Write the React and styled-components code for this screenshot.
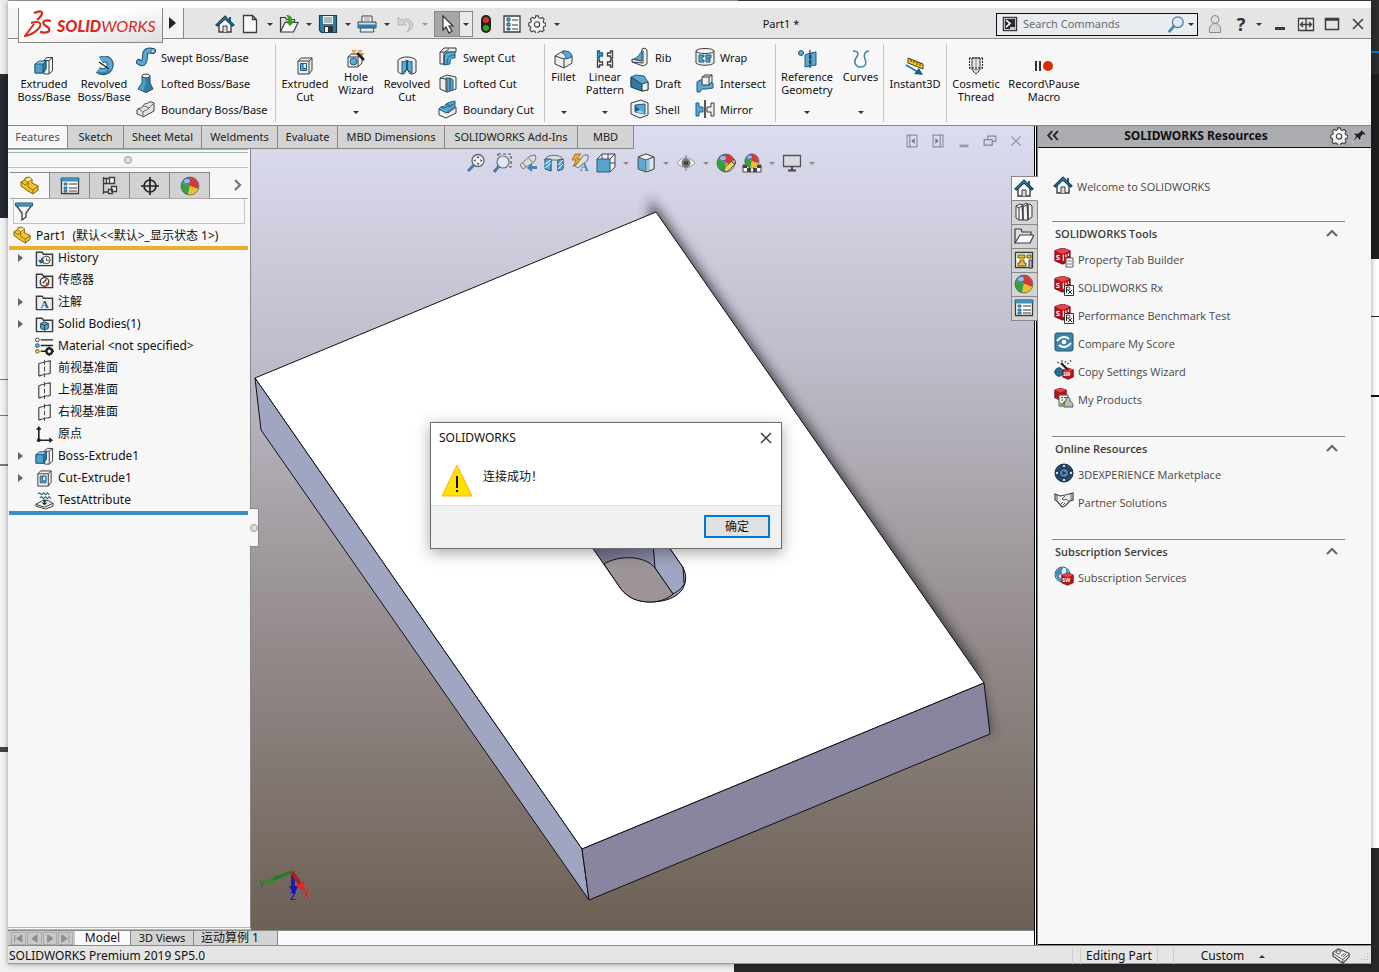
import React, { useState } from "react"
import styled, { createGlobalStyle, css } from "styled-components"

const BLUE = "#5ba9d2"
const DEEP = "#1c5f85"
const INK = "#3d3d3d"
const PALE = "#e4e4e4"

const GlobalStyle = createGlobalStyle`
  * {
    box-sizing: border-box;
  }

  body {
    margin: 0;
    overflow: hidden;
    color: #111;
    font-family: "Noto Sans", "Noto Sans CJK SC", sans-serif;
    font-size: 12px;
    line-height: 16px;
  }

  button,
  input {
    margin: 0;
    padding: 0;
    border: 0;
    background: none;
    color: inherit;
    font: inherit;
  }

  ul {
    margin: 0;
    padding: 0;
    list-style: none;
  }
`

/* ---------- icons ---------- */

const cubeShape = (
  <>
    <path d="M1 3 10 0l9 3v12l-9 4-9-4z" fill="#b3131b" stroke="#5c0a0e" />
    <path d="M1 3 10 0l9 3-9 4z" fill="#e0454b" />
  </>
)

const cube = (
  <>
    {cubeShape}
    <text x="2" y="14" fontSize="8" fontWeight="700" fill="#fff">SW</text>
  </>
)

// the right half of this cube sits behind a badge
const badgedCube = (
  <g transform="scale(.85)">
    {cubeShape}
    <path d="M11 8v7M14 7.500v3M17 6.500v3" stroke="#fff" strokeWidth="1.400" />
    <text x="2" y="14" fontSize="9" fontWeight="700" fill="#fff">S</text>
  </g>
)

const ball = (
  <>
    <path d="M10 10 2 6a9 9 0 0 1 8-5z" fill="#3f78c4" />
    <path d="M10 10V1a9 9 0 0 1 8 12z" fill="#d43a35" />
    <path d="M10 10 2 6a9 9 0 0 0 6 13z" fill="#35a23d" />
    <path d="m10 10 8 3a9 9 0 0 1-10 6z" fill="#f0bf2d" />
    <circle cx="10" cy="10" r="9" fill="none" stroke="#555" strokeWidth=".7" />
    <ellipse cx="7" cy="5" rx="3" ry="2" fill="#fff" opacity=".5" />
  </>
)

const folder = (
  <path d="M1.500 3.500h6l1.500 2h9.500v12h-17z" fill="#eee" stroke={INK} strokeWidth="1.500" />
)

const extruded = (
  <>
    <path d="M10 4 13 1.500h5.500V15L15 18h-5z" fill="#f4f4f4" stroke={INK} />
    <path d="M15 4.500V18M10 4.500h5l3.500-3" fill="none" stroke={INK} />
    <path d="m1 8 4-3h7v8l-3 4H1z" fill="#9bcfe8" stroke={DEEP} />
    <path d="M1 8h8v9H1z" fill="#4f9fc8" stroke={DEEP} />
    <path d="m9 8 3-3v8l-3 4z" fill="#2f7ba3" stroke={DEEP} />
  </>
)

const extrudedCut = (
  <>
    <path d="m3 5 3-3h11v12l-3 4H3z" fill="#eee" stroke={INK} />
    <path d="M3 5h11v13M14 5l3-3" fill="none" stroke={INK} />
    <path d="M5.500 7.500h6v7h-6z" fill={BLUE} stroke={DEEP} />
    <path d="M8 7.500h3.500v5H8z" fill="#d7ecf7" stroke={DEEP} />
  </>
)

const partShape = (
  <>
    <path d="m1 6 4-2V2l4-1 3 2v4l6 3v4l-5 4-5-3-7-5z" fill="#f3c42e" stroke="#7c5d09" />
    <path d="m5 4 3 2 4-3M8 6v5l5 3 5-4M13 14v4M1 6l4 3 3-2" fill="none" stroke="#8d6b0e" />
    <path d="m5 4 4-2.500L12 3 8 5.500z" fill="#fbe48b" />
  </>
)

const icons = {
  home: (
    <>
      <path d="M4 9v9h12V9l-6-5z" fill="#f6f6f6" stroke={INK} strokeWidth="1.400" />
      <path d="M8 18v-6h4v6" fill="#ddd" stroke={INK} />
      <path d="M14 3h2v4h-2z" fill={DEEP} />
      <path d="m1 11 9-9 9 9-1.500 1L10 5l-7.500 7z" fill="#3f8db5" stroke="#14405a" strokeWidth="1.200" />
    </>
  ),
  page: (
    <path d="M3.500 1.500h9l4 4v13h-13zM12.500 1.500v4h4" fill="#f8f8f8" stroke={INK} strokeWidth="1.300" />
  ),
  open: (
    <>
      <path d="M1.500 17.500v-14h5l1 2h8v3" fill="#ddd" stroke={INK} strokeWidth="1.200" />
      <path d="M1.500 18 6 8.500h13L14.500 18z" fill="#fafafa" stroke={INK} strokeWidth="1.200" />
      <path d="M7 1c5 0 6 2 6 6h3l-5 5-5-5h3c0-3 0-4-2-6z" fill="#3c9c20" />
    </>
  ),
  save: (
    <>
      <path d="M1.500 1.500h17v17h-15l-2-2z" fill="#2f7ca5" stroke="#173f57" strokeWidth="1.200" />
      <path d="M5 2h10v8H5z" fill="#f4f4f4" />
      <path d="M6 4h8M6 6h8M6 8h8" stroke="#777" />
      <path d="M6 12h9v6H6z" fill="#333" />
      <path d="M7 13h3v5H7z" fill="#eee" />
    </>
  ),
  print: (
    <>
      <path d="M5 8V2h10v6" fill="#fff" stroke={INK} />
      <path d="M7 4h6M7 6h6" stroke="#888" />
      <path d="M1 8h18v6H1z" fill="#cfe0e9" stroke={INK} />
      <path d="M1 10.500h18V14H1z" fill="#2f7ca5" />
      <path d="M4 14h12l1 4H3z" fill="#e8f2f8" stroke={DEEP} />
    </>
  ),
  undo: (
    <path d="M2 3v8h8L7 8c4-2 8 1 6 6l-2 4c6-3 7-8 4-11-3-3-7-2-10-1z" fill="#d2d2d2" stroke="#b5b5b5" />
  ),
  cursor: <path d="M6 2v14l3-3 3 6 3-2-3-5h4z" fill="#fff" stroke="#333" strokeWidth="1.200" />,
  traffic: (
    <>
      <rect x="5" y="1" width="10" height="18" rx="5" fill="#222" />
      <circle cx="10" cy="6" r="3" fill="#e0351d" />
      <circle cx="10" cy="14" r="3" fill="#35a518" />
    </>
  ),
  list: (
    <>
      <path d="M2 2h16v16H2z" fill="#fafafa" stroke={INK} strokeWidth="1.300" />
      <path d="M5 4h3v3H5zM5 9h3v3H5zM5 14h3v2H5z" fill={BLUE} stroke={DEEP} />
      <path d="M10 6h6M10 11h6M10 15h6" stroke={INK} />
    </>
  ),
  gear: (
    <>
      <path
        d="M8.500 1h3l.6 2.200 1.700.7 2-1.100 2.100 2.100-1.100 2 .7 1.700 2.200.6v3l-2.200.6-.7 1.700 1.100 2-2.100 2.100-2-1.100-1.700.7-.6 2.200h-3l-.6-2.200-1.700-.7-2 1.100-2.100-2.100 1.100-2-.7-1.700L.8 12V9l2.200-.6.700-1.700-1.100-2 2.100-2.100 2 1.100 1.700-.7z"
        fill="#f5f5f5"
        stroke={INK}
        strokeWidth="1.200"
      />
      <circle cx="10" cy="10.500" r="3" fill="none" stroke={INK} strokeWidth="1.200" />
    </>
  ),
  prompt: (
    <>
      <path d="M1 1h18v18H1z" fill="#2b2b2b" />
      <path d="M3 3h14v14H3z" fill="none" stroke="#fff" />
      <path d="m5 5 5 4.500L5 14M10 15h6" fill="none" stroke="#fff" strokeWidth="2" />
    </>
  ),
  magnifier: (
    <>
      <path d="m8 12-6 7" stroke="#4a86ab" strokeWidth="3" />
      <circle cx="12" cy="8" r="6" fill="#dcecf7" stroke="#55788d" strokeWidth="1.300" />
    </>
  ),
  user: (
    <>
      <circle cx="10" cy="5.500" r="4" fill="#ddd" stroke="#888" />
      <path d="M4.500 18.500c-1-6 2-9 5.500-9s6.500 3 5.500 9z" fill="#d8d8d8" stroke="#888" />
    </>
  ),
  minimize: <path d="M5 13h10v3H5z" fill={INK} />,
  span: (
    <path d="M2.500 4.500h15v12h-15zM10 4v13M4.500 10.500h11M7 8l-2.500 2.500L7 13M13 8l2.500 2.500L13 13" fill="none" stroke={INK} strokeWidth="1.300" />
  ),
  maximize: <path d="M3.500 4.500h13v11h-13zM3 6h14" fill="none" stroke={INK} strokeWidth="1.500" />,
  close: <path d="m5 5 10 10M15 5 5 15" stroke={INK} strokeWidth="1.500" />,
  extruded,
  revolved: (
    <>
      <path d="M7 4c5-3 10 1 9 6-1 6-8 7-12 4" fill="none" stroke="#1d4b66" strokeWidth="7" />
      <path d="M7 4c5-3 10 1 9 6-1 6-8 7-12 4" fill="none" stroke={BLUE} strokeWidth="5" />
      <path d="M15 14c-3 4-8 4-11 2" fill="none" stroke="#2f7ba3" strokeWidth="2" />
      <path d="m5 6 10 7" stroke="#222" strokeWidth="1.300" />
    </>
  ),
  swept: (
    <>
      <path d="M3 15c5 4 6-2 6-6 0-6 4-6 8-5" fill="none" stroke="#1f4f6b" strokeWidth="6" strokeLinecap="round" />
      <path d="M3 15c5 4 6-2 6-6 0-6 4-6 8-5" fill="none" stroke={BLUE} strokeWidth="4" strokeLinecap="round" />
      <circle cx="17" cy="4" r="2" fill="#b8dcef" stroke={DEEP} strokeWidth=".7" />
    </>
  ),
  lofted: (
    <>
      <path d="M6 3v7l-4 6 8 3.500 7-3.500-3-6V3z" fill="#2f7ca5" stroke="#1d4b66" />
      <path d="M6.500 4v6l-4 6 5 2 2-8V4z" fill="#4f9fc8" />
      <ellipse cx="10" cy="3" rx="4" ry="2" fill="#eee" stroke={INK} />
    </>
  ),
  boundary: (
    <>
      <path d="M1 11c3-4 4 0 6-4s4-1 6-4c2-1 4 1 5 1v8l-11 6c-2-2-4-2-6-3z" fill={PALE} stroke={INK} />
      <path d="M1 11c3-2 4 1 6 2 3-3 4-1 6-4 2-2 4-4 5-5M7 13v5M7 7c2 0 4 1 6 2" fill="none" stroke="#666" />
    </>
  ),
  extrudedCut,
  hole: (
    <>
      <path d="m2 8 3-3h11v9l-4 4H2z" fill="#eee" stroke={INK} />
      <path d="M2 8h10v10M12 8l4-3" fill="none" stroke={INK} />
      <circle cx="7.500" cy="12.500" r="3.500" fill={BLUE} stroke={DEEP} />
      <path d="m11 4 7 7" stroke="#222" strokeWidth="2.500" />
      <path d="M6 1l2 2 2-2M12 1l2 2 2-2M5 5l3-1M15 6l3-2" fill="none" stroke="#e0912a" strokeWidth="1.400" />
    </>
  ),
  revolvedCut: (
    <>
      <path d="M1 4c4-4 14-4 18 0v12c-2 2-4 2-6 2l-3-5-3 5c-2 0-4 0-6-2z" fill="#eee" stroke={INK} />
      <path d="M5 5.500c3 1 3-1 5-1v9l-5 4zM15 5.500c-3 1-3-1-5-1v9l5 4z" fill={BLUE} stroke={DEEP} />
      <path d="M10 4v10" stroke="#143c54" />
    </>
  ),
  sweptCut: (
    <>
      <path d="m2 5 4-4h12v4H8v12H2z" fill="#eee" stroke={INK} />
      <path d="M6 18V9c1-4 5-4 11-4v6c-4 0-5 1-5 6z" fill={BLUE} stroke={DEEP} />
      <path d="M6 5v13M2 5h5l4-3" fill="none" stroke={INK} />
      <path d="M9 17c0-6 2-9 8-9" fill="none" stroke="#235f82" />
    </>
  ),
  loftedCut: (
    <>
      <path d="m2 5 7-3 9 2v12l-9 3-7-3z" fill="#eee" stroke={INK} />
      <path d="M8 5h4l3 2v10l-6 2V9z" fill={BLUE} stroke={DEEP} />
      <path d="M12 5v12M2 5l6 1v12" fill="none" stroke={INK} />
    </>
  ),
  boundaryCut: (
    <>
      <path d="m1 10 9 4 8-6v6l-10 5-7-3z" fill="#eee" stroke={INK} />
      <path d="M1 10c3-5 5 0 7-5 3-2 5-2 9-3v6l-9 6z" fill={BLUE} stroke={DEEP} />
      <path d="M4 8c4 3 4-2 7 0 2-3 4-2 6-4M8 5c2 2 4 0 6 3" fill="none" stroke={DEEP} />
    </>
  ),
  fillet: (
    <>
      <path d="m1 7 8-5 6 1 3 4v7l-8 5-9-4z" fill="#eee" stroke={INK} />
      <path d="m8 4 2-2c5 0 8 2 8 6l-6 2c0-4-2-5-4-6z" fill={BLUE} stroke={DEEP} />
      <path d="m1 7 9 3 2-1M10 10v9" fill="none" stroke={INK} />
    </>
  ),
  pattern: (
    <>
      <path d="M2.500 2h2v2h3v3h-3v2h-2z" fill={BLUE} stroke={DEEP} strokeWidth="1.300" />
      <path d="M17.500 2h-2v2h-3v3h3v2h2zM2.500 11h2v2h3v3h-3v2h-2zM17.500 11h-2v2h-3v3h3v2h2z" fill="#fff" stroke={INK} strokeWidth="1.300" />
    </>
  ),
  rib: (
    <>
      <path d="M12 2 15 1l2 2v14l-4 2-11-4v-3l9 2z" fill="#eee" stroke={INK} />
      <path d="M12 4v10l-8-2c4-2 5-4 8-8z" fill={BLUE} stroke={DEEP} />
      <path d="m2 15 11 1V4" fill="none" stroke={INK} />
    </>
  ),
  draft: (
    <>
      <path d="m1 4 5-2 8 1 4 6v8l-6 1-11-4z" fill={BLUE} stroke={DEEP} />
      <path d="M1 4 12 11v7L1 14z" fill="#2f7ca5" stroke={INK} />
      <path d="m12 11 6-2v8l-6 1z" fill="#eee" stroke={INK} />
    </>
  ),
  shell: (
    <>
      <path d="m1 4 10-3 7 3v12l-8 3-9-4z" fill="#eee" stroke={INK} />
      <path d="m5 6 10-1v10L5 13z" fill={BLUE} stroke={DEEP} />
      <path d="M5 13V6l5 5z" fill={DEEP} />
      <path d="m10 11 5 4-10-2z" fill="#9dd2ec" />
    </>
  ),
  wrap: (
    <>
      <path d="M1 4v12c3 3 15 3 18 0V4z" fill="#eee" stroke={INK} />
      <ellipse cx="10" cy="4" rx="9" ry="2.500" fill="#f5f5f5" stroke={INK} />
      <path d="M4 8h5v2H7v3h2v2H4zM16 8h-5v7h4v-3h-2v-1h3z" fill={BLUE} stroke={DEEP} />
    </>
  ),
  intersect: (
    <>
      <path d="M2 9 5 7h7v3h6v5l-7 1H7l-2 3H2z" fill={BLUE} stroke={DEEP} />
      <path d="m7 4 3-2h7v7l-3 3H7z" fill="#eee" stroke={INK} />
      <path d="M7 4h7v8M14 4l3-2" fill="none" stroke={INK} />
    </>
  ),
  mirror: (
    <>
      <path d="M1 4h3v4h4v5H4v4H1z" fill={BLUE} stroke={DEEP} />
      <path d="M19 4h-3v4h-4v5h4v4h3z" fill="#eee" stroke={INK} />
      <path d="M10 1v18" stroke="#111" strokeWidth="1.400" />
    </>
  ),
  reference: (
    <>
      <circle cx="4" cy="4" r="2.500" fill={BLUE} stroke={DEEP} />
      <path d="m8 6 5-2v13l-5 1zM14 4l5-1v13l-5 1z" fill={BLUE} stroke={DEEP} />
      <path d="M13 1v18" stroke="#111" strokeDasharray="4 1" />
    </>
  ),
  curves: (
    <path d="M2 2c6 0 6 3 3 7s0 9 4 9c6 0 7-4 5-8s0-8 4-8" fill="none" stroke="#3b82a8" strokeWidth="1.500" />
  ),
  instant: (
    <>
      <path d="m3 2 15 6v5L3 7z" fill="#f6c62d" stroke="#4a3b10" />
      <path d="M6 3v3M9 4v3M12 6v3M15 7v3" stroke="#4a3b10" />
      <path d="m1 9 12 7" stroke="#2f7ca5" strokeWidth="2" />
      <path d="m18 19-9-1 5-6z" fill={DEEP} />
    </>
  ),
  thread: (
    <>
      <path d="M6 2h8v12l-4 4-4-4z" fill={PALE} stroke={INK} />
      <path d="M6 14h8M10 2v12" stroke="#888" />
      <path d="M3.500 2v10M16.500 2v10" stroke="#222" strokeDasharray="2 1" />
      <path d="M3 2h14M3 12h14" stroke="#222" strokeDasharray="2 1" />
    </>
  ),
  record: (
    <>
      <path d="M2 5v10M6 5v10" stroke="#333" strokeWidth="2" />
      <circle cx="14" cy="10" r="5" fill="#dc2a05" />
    </>
  ),
  part: partShape,
  properties: (
    <>
      <path d="M1.500 2.500h17v15h-17z" fill="#fafafa" stroke={INK} strokeWidth="1.300" />
      <path d="M1 2h18v3H1z" fill="#4b9cc6" stroke={DEEP} strokeWidth=".7" />
      <path d="M4 7h3v2H4zM4 11h3v2H4zM4 14h3v2H4z" fill={BLUE} stroke={DEEP} strokeWidth=".8" />
      <path d="M9 8h8M9 12h8M9 15h8" stroke={INK} />
    </>
  ),
  config: (
    <>
      <path d="M3.500 1v17M3.500 2.500h3M3.500 7.500h3M6 5h3M3.500 16h7" fill="none" stroke={INK} strokeWidth="1.300" />
      <path d="M6.500 2.500h3v5h-3zM9.500 1.500h5v6h-5zM11.500 10.500h5v5h-5zM8.500 13.500h4v4h-4z" fill="#f4f4f4" stroke={INK} strokeWidth="1.300" />
    </>
  ),
  target: (
    <>
      <circle cx="10" cy="10" r="6" fill="none" stroke="#222" strokeWidth="1.700" />
      <path d="M10 1v18M1 10h18" stroke="#222" strokeWidth="1.700" />
    </>
  ),
  ball,
  funnel: (
    <>
      <path d="M2 4 8 12v7l4-3v-4l6-8z" fill="#f6f6f6" stroke={INK} strokeWidth="1.300" />
      <path d="M1.500 2h17v3h-17z" fill="#4b9cc6" stroke={DEEP} />
    </>
  ),
  history: (
    <>
      {folder}
      <circle cx="12" cy="11.500" r="4" fill="#fff" stroke={INK} />
      <path d="M12 9v3h3" fill="none" stroke={INK} />
      <path d="M9 15c-3-1-3-5-1-6M4 12l2 3 3-3z" fill={DEEP} stroke={DEEP} />
    </>
  ),
  sensor: (
    <>
      {folder}
      <circle cx="10" cy="11.500" r="4.500" fill="#fff" stroke={INK} strokeWidth="1.500" />
      <path d="m8 13 4-4" stroke={INK} strokeWidth="1.500" />
      <path d="M11 12h3v2l-2 2z" fill="#d93a1d" />
    </>
  ),
  notes: (
    <>
      {folder}
      <text x="10" y="16" fontSize="12" fontWeight="700" fontFamily="Liberation Serif, serif" textAnchor="middle" fill={DEEP}>A</text>
    </>
  ),
  bodies: (
    <>
      {folder}
      <path d="m6 9 4-2 4 2v5l-4 2-4-2z" fill={BLUE} stroke="#173f57" />
      <path d="m6 9 4 2 4-2M10 11v5" fill="none" stroke="#173f57" />
    </>
  ),
  material: (
    <>
      <path d="M6 3h13M6 9h13M6 15h5" stroke="#222" strokeWidth="1.500" />
      <circle cx="2.500" cy="3" r="2" fill="#fff" stroke={INK} />
      <circle cx="2.500" cy="9" r="2" fill={BLUE} stroke={DEEP} />
      <circle cx="2.500" cy="15" r="2" fill="#f3c42e" stroke="#8d6b0e" />
      <circle cx="15" cy="15" r="3" fill="#fff" stroke="#222" strokeWidth="2.500" />
      <path d="M15 10v2M15 18v2M10 15h2M18 15h2" stroke="#222" strokeWidth="1.500" />
    </>
  ),
  plane: (
    <>
      <path d="M4 5v13M4 5l3-1M13 2.500 16 2v13l-3 1M4 18l3-1" fill="none" stroke={INK} strokeWidth="1.200" />
      <path d="M10 1v18" stroke={INK} strokeDasharray="5 2" />
      <path d="m7 4 6-1.500M7 17l6-1.500" stroke={INK} />
    </>
  ),
  origin: (
    <>
      <path d="M4 16V4M4 16h12" stroke="#222" strokeWidth="1.700" />
      <path d="m4 1 3 4H1zM19 16l-4-3v6z" fill="#222" />
      <circle cx="4" cy="16" r="2" fill="#222" />
    </>
  ),
  attribute: (
    <>
      <path d="m3 3 2-1 2 2 2-2 2 2 2-2 2 2M5 7l2-1 2 2 2-2 2 2 2-2 2 2" fill="none" stroke={DEEP} strokeWidth="1.200" />
      <path d="m1 14 7-4h6l5 3v3l-8 3-10-3z" fill="#eee" stroke={INK} />
      <path d="m1 14 9 3 9-4" fill="none" stroke={INK} />
      <path d="M10 9v3" stroke="#222" strokeWidth="2" />
      <path d="m7 12 3 3 3-3z" fill="#222" />
    </>
  ),
  zoomFit: (
    <>
      <path d="m8 12-6 6" stroke="#447fa3" strokeWidth="3" />
      <circle cx="12" cy="7.500" r="6" fill="#eef2f8" stroke="#666" strokeWidth="1.300" />
      <path d="m12 3 1.500 2h-3zM12 12l1.500-2h-3zM7.500 7.500l2-1.500v3zM16.500 7.500l-2-1.500v3z" fill="#444" />
    </>
  ),
  zoomArea: (
    <>
      <path d="M6 1h13v13H6z" fill="none" stroke="#555" strokeWidth="1.200" strokeDasharray="3 2" />
      <path d="m7 13-5 6" stroke="#447fa3" strokeWidth="3" />
      <circle cx="11" cy="9" r="6" fill="#dde9f3" stroke="#777" strokeWidth="1.200" />
    </>
  ),
  previous: (
    <>
      <path d="m2 12 10-9 5-1 1 3-2 4-11 7z" fill="#ddd" stroke="#777" />
      <path d="m10 4 4 5M5 10l3 4" stroke="#777" />
      <path d="M19 13h-5v-3l-5 5 5 4v-3h5z" fill="#4187ad" />
    </>
  ),
  section: (
    <>
      <path d="M1 6c3-5 15-5 18 0v9l-5 2V7H7v11l-5-2z" fill="#ddd" stroke="#666" />
      <path d="M1 6h6v12l-6-2zM14 7l5-1v10l-5 2z" fill={BLUE} stroke={DEEP} />
      <path d="m1 11 6-4M1 15l6-5M14 12l5-5M14 16l5-5" stroke="#e6f4fb" />
    </>
  ),
  dynamic: (
    <>
      <path d="m5 13 9-11h4v5L8 15z" fill="#ddd" stroke="#777" />
      <path d="m5 1-3 6h4l-3 7 8-8H7l4-5z" fill="#f0ab2a" stroke="#9c6a0d" strokeWidth=".8" />
      <text x="14" y="18" fontSize="12" fontWeight="700" fontFamily="Liberation Serif, serif" textAnchor="middle" fill="#3d84ab">A</text>
    </>
  ),
  orientation: (
    <>
      <path d="m1 6 5-5h13v13l-5 5" fill="#eef0f8" stroke="#444" />
      <path d="M14 6l5-5M6 1v6M12 1v5M14 10h5" stroke="#444" />
      <path d="M1 6h13v13H1z" fill="#5aa3c9" stroke={DEEP} />
    </>
  ),
  display: (
    <>
      <path d="m2 4 8-3 8 3v12l-8 3-8-3z" fill={BLUE} stroke="#555" />
      <path d="m2 4 8-3 8 3-8 3z" fill="#e9f3f8" stroke="#555" />
      <path d="m10 7 8-3v12l-8 3z" fill="#dfe8ee" stroke="#555" />
      <path d="M12 7v10" stroke="#8cc4df" strokeWidth="3" />
    </>
  ),
  eye: (
    <>
      <path d="M1 10c5-7 13-7 18 0-5 6-13 6-18 0z" fill="#eee" stroke="#999" />
      <circle cx="10" cy="10" r="4.500" fill="#777" />
      <circle cx="10" cy="10" r="2" fill="#222" />
      <path d="M10 2v16" stroke="#777" />
    </>
  ),
  appearance: (
    <>
      {ball}
      <path d="m8 19 1-5 8-7 3 3-8 8z" fill="#f4d35c" stroke="#555" />
      <path d="m15 8 3-2 2 3-2 2z" fill="#e08c8c" stroke="#555" />
    </>
  ),
  scene: (
    <>
      <path d="M1 12h18v7H1z" fill="#fff" stroke="#444" />
      <path d="M1 12h4v3H1zM15 12h4v3h-4zM5 15h4v4H5zM11 15h4v4h-4z" fill="#444" />
      <g transform="translate(2 0) scale(.8)">{ball}</g>
    </>
  ),
  monitor: (
    <>
      <path d="M1.500 2.500h17v11h-17z" fill="#d9dae2" stroke="#555" strokeWidth="1.300" />
      <path d="M10 14v3M6 17.500h8" stroke="#444" strokeWidth="2" />
    </>
  ),
  paneLeft: (
    <>
      <path d="M4.500 3.500h11v13h-11zM7.500 4v12" fill="none" stroke="#8f8f99" strokeWidth="1.300" />
      <path d="M13 7v6l-4-3z" fill="#777" />
    </>
  ),
  paneRight: (
    <>
      <path d="M4.500 3.500h11v13h-11zM12.500 4v12" fill="none" stroke="#8f8f99" strokeWidth="1.300" />
      <path d="M7 7v6l4-3z" fill="#777" />
    </>
  ),
  docMinimize: <path d="M5 14h10v3H5z" fill="#999" />,
  restore: <path d="M3.500 8.500h9v6h-9zM7.500 8V4.500h9v6H13" fill="none" stroke="#888" strokeWidth="1.300" />,
  docClose: <path d="m5 5 10 10M15 5 5 15" stroke="#999" strokeWidth="1.400" />,
  collapse: <path d="M9 4 4 9.500 9 15M16 4l-5 5.500 5 5.500" fill="none" stroke="#222" strokeWidth="2.300" />,
  pin: <path d="m12 1 7 7-2 1-2-1-3 4c1 2 0 3-1 4l-3-4-7 7 5-9-3-3c2-1 3-1 5 0l4-3z" fill="#222" stroke="#eee" strokeWidth=".7" />,
  chevronRight: <path d="m7 5 5 5-5 5" fill="none" stroke="#777" strokeWidth="2.300" />,
  chevronUp: <path d="m5 12 5-5 5 5" fill="none" stroke="#666" strokeWidth="2" />,
  library: (
    <>
      <path d="m2 4 4-2 3 1v15H5l-3-2zM8 4l4-3 2 1v16H9zM13 3l3-1 2 2v11l-4 3z" fill="#f2f2f2" stroke={INK} />
      <path d="m2 4 3 2v12M5 6l4-3M9 5v13M9 5l5-3M14 4v14" fill="none" stroke={INK} />
    </>
  ),
  explorer: (
    <>
      <path d="M1 17V3h6l1 3h9v3" fill="#ddd" stroke={INK} strokeWidth="1.200" />
      <path d="M1 17 6 9h14l-4 8z" fill="#fafafa" stroke={INK} strokeWidth="1.200" />
    </>
  ),
  palette: (
    <>
      <path d="M1.500 2.500h17v15h-17z" fill="#fff" stroke={INK} strokeWidth="1.400" />
      <path d="M4 5h7v3H4zM13 5h4v3h-4zM6 10h4v3h2v3H4v-3h2z" fill="#f2c12c" stroke="#6d5208" />
      <path d="M15 10h3v8h-3z" fill="#bbb" stroke={INK} />
    </>
  ),
  builder: (
    <>
      {badgedCube}
      <path d="M12 10h7v9h-7z" fill="#fff" stroke="#555" />
      <path d="M13 13h5M13 16h5" stroke="#777" />
    </>
  ),
  rx: (
    <>
      {badgedCube}
      <path d="M10.500 9.500h9v10h-9z" fill="#fff" stroke="#333" />
      <path d="M12.500 17v-6h2c2 0 2 3 0 3h-2M14 14l4 4M18 14l-4 4" fill="none" stroke="#222" />
    </>
  ),
  compare: (
    <>
      <rect x="1" y="1" width="18" height="18" rx="2" fill="#3f83ab" stroke="#1d5273" />
      <path d="M3 9c4-5 9-5 12-2M17 11c-4 5-9 5-12 2" fill="none" stroke="#fff" strokeWidth="2" />
      <circle cx="10" cy="10" r="2.300" fill="#fff" />
    </>
  ),
  wizard: (
    <>
      <circle cx="5" cy="12" r="3.500" fill="#4b9cc6" stroke={DEEP} strokeWidth="2" />
      <path d="M5 7v10M0 12h10" stroke={DEEP} strokeWidth="1.500" />
      <g transform="translate(8 8) scale(.6)">{cube}</g>
      <path d="m7 3 7 7" stroke="#222" strokeWidth="2.300" />
      <path d="M3 2l2 1M8 0v2M12 1l-1 2M15 3l-2 1M16 0l1 2" stroke="#333" />
    </>
  ),
  products: (
    <>
      <g transform="scale(.65)">{cubeShape}</g>
      <path d="M5 7h9v11H5z" fill="#f4f4f4" stroke="#555" />
      <path d="M7 9.500h2M7 12h2M10 9.500h3" stroke="#555" />
      <path d="m6 15 2 2 3-4" fill="none" stroke="#3f9c20" strokeWidth="1.400" />
      <path d="M10 19c0-5 1-5 2-6-1-5 5-5 4 0 2 1 3 2 3 6z" fill="#bbb" stroke="#555" />
    </>
  ),
  market: (
    <>
      <circle cx="10" cy="10" r="9" fill="#27476a" stroke="#152d47" />
      <circle cx="10" cy="10" r="4.500" fill="#5f87ab" stroke="#18324e" />
      <path d="m8.500 7.500 4 2.500-4 2.500z" fill="#1f3e5e" />
      <path d="M10 2v2M10 16v2M2 10h2M16 10h2" stroke="#cfe1f0" strokeWidth="2" />
    </>
  ),
  handshake: (
    <>
      <path d="m1 3 5 2 5-1 8-2v7l-3 1-5 5-3 1-5-6-2-1z" fill="#eee" stroke="#444" strokeWidth="1.200" />
      <path d="m11 5-3 3 2 1 2-1 4 3M7 13l2-2M9 14l2-2M3 4v5M17 3v6" fill="none" stroke="#555" />
    </>
  ),
  globe: (
    <>
      <circle cx="8.500" cy="8.500" r="7.500" fill="#dff0f8" stroke="#24546f" />
      <path d="M3 4c3-3 6-3 6-2S7 5 8 7s-3 1-3 3 3 2 2 5c-4-1-7-7-4-11zM12 2l3 5-3 1z" fill="#4589ad" />
      <g transform="translate(7 7) scale(.65)">{cube}</g>
    </>
  ),
  tag: (
    <>
      <path d="m1 6 6-4 12 5v4l-7 7-11-8z" fill="#f5f5f5" stroke={INK} strokeWidth="1.200" />
      <path d="m1 7 11 7 7-6M12 14v3M4 6l3-2 3 1-2 3zM10 10l4-3M12 11l4-3" fill="none" stroke={INK} />
    </>
  ),
}

const Svg = styled.svg`
  display: block;
  flex: none;
  width: ${p => p.$size}px;
  height: ${p => p.$size}px;
`

const Icon = ({ name, size = 20 }) => (
  <Svg viewBox="0 0 20 20" $size={size} aria-hidden="true">
    {icons[name]}
  </Svg>
)

const Caret = styled.span`
  border: 3px solid transparent;
  border-top-color: ${p => p.$color || "#333"};
  border-bottom-width: 0;
`

/* ---------- frame ---------- */

const Desktop = styled.div`
  display: grid;
  grid-template: 1px minmax(0, 1fr) 8px / 8px minmax(0, 1fr) 8px;
  height: 100vh;
  background: linear-gradient(to right, #eff0f2 734px, #29292b 734px);
`

const strip = css`
  grid-row: 1 / 3;
`

const LeftStrip = styled.div`
  ${strip}
  grid-column: 1;
  background: linear-gradient(
    #efefef 74px,
    #262a33 74px 218px,
    #f3f3f3 218px 379px,
    #777 379px 380px,
    #f3f3f3 380px 415px,
    #777 415px 416px,
    #f3f3f3 416px 464px,
    #777 464px 466px,
    #f3f3f3 466px 747px,
    #444 747px 752px,
    #f3f3f3 752px
  );
`

const RightStrip = styled.div`
  ${strip}
  grid-column: 3;
  background: linear-gradient(
    #2d2d30 51px,
    #007acc 51px 53px,
    #2d2d30 53px 74px,
    #1e1e1e 74px 259px,
    #fff 259px 316px,
    #222 316px 317px,
    #fff 317px 395px,
    #111 395px 397px,
    #fff 397px 848px,
    #29292b 848px
  );
`

const TopStrip = styled.div`
  grid-column: 2;
  grid-row: 1;
  background: linear-gradient(to right, #a8a8a8 730px, #444 730px);
`

const Window = styled.div`
  position: relative;
  grid-column: 2;
  grid-row: 2;
  display: flex;
  flex-direction: column;
  min-height: 0;
  background: #f7f7f7;
  box-shadow: 0 0 6px rgba(0, 0, 0, 0.4);
`

const TitleBar = styled.header`
  display: flex;
  align-items: center;
  height: 38px;
  padding: 2px 3px 0 0;
  border-top: 7px solid #fff;
  border-bottom: 1px solid #888;
  background: #e5e5e5;
`

const LogoSlot = styled.div`
  position: relative;
  flex: none;
  align-self: stretch;
  display: flex;
  justify-content: flex-end;
  width: 176px;
  margin-top: -2px;
  border-right: 1px solid #888;
  background: #f4f4f4;
`

const Logo = styled.div`
  position: absolute;
  z-index: 2;
  top: 0;
  left: 10px;
  display: flex;
  align-items: center;
  gap: 3px;
  width: 145px;
  height: 35px;
  padding-left: 5px;
  border: 1px solid #888;
  border-top: 0;
  background: linear-gradient(to bottom right, #fff 40%, #ddd);
  color: #da291c;
  font: italic 400 16px/20px Lato, sans-serif;

  b {
    font-weight: 900;
  }
`

const LogoMark = styled.svg`
  flex: none;
  width: 30px;
  height: 30px;
`

const LogoText = styled.span`
  padding-top: 2px;
`

const MenuToggle = styled.button`
  display: flex;
  align-items: center;
  width: 14px;

  &::after {
    content: "";
    border: 6px solid transparent;
    border-left: 7px solid #222;
    border-right: 0;
  }
`

const QuickBar = styled.nav`
  display: flex;
  align-items: center;
  margin-left: 31px;
`

const IconButton = styled.button`
  display: flex;
  flex: none;
  align-items: center;
  justify-content: center;
  width: ${p => p.$width || 20}px;
  height: ${p => p.$height || 24}px;
  margin-left: ${p => p.$gap || 0}px;
`

const SelectTool = styled.div`
  display: flex;
  height: 26px;
  border: 1px solid #888;
  background: #e9e9e9;

  button {
    height: 24px;
  }

  button:first-child {
    border-right: 1px solid #888;
    background: #a6a6a6;
  }
`

const DocTitle = styled.h1`
  flex: 1;
  margin: 0;
  font-size: 11px;
  font-weight: 400;
  text-align: center;
`

const SearchBox = styled.label`
  display: flex;
  align-items: center;
  width: 202px;
  height: 23px;
  margin-right: 1px;
  padding-left: 5px;
  border: 1px solid #111;
  background: #e9edf2;

  input {
    flex: 1;
    min-width: 0;
    margin-left: 5px;
    outline: 0;
    font-size: 11px;
  }

  input::placeholder {
    color: #6b6b6b;
    opacity: 1;
  }
`

const HelpMark = styled.span`
  color: #333;
  font-size: 18px;
  font-weight: 700;
`

/* ---------- ribbon ---------- */

const Ribbon = styled.div`
  display: flex;
  flex: none;
  height: 87px;
  padding: 5px 0 3px;
  border-bottom: 1px solid #888;
  font-size: 11px;
  line-height: 13px;
`

const RibbonGroup = styled.div`
  display: flex;
  padding-left: ${p => p.$pad || 0}px;
  border-right: ${p => (p.$last ? 0 : 1)}px solid #c6c6c6;
`

const BigButton = styled.button`
  position: relative;
  display: flex;
  flex: none;
  flex-direction: column;
  align-items: center;
  gap: 1px;
  width: ${p => p.$width}px;
  padding-top: ${p => (p.$menu ? 5 : 12)}px;
  white-space: pre-line;

  ${Caret} {
    margin-top: auto;
    margin-bottom: 8px;
  }
`

const SmallStack = styled.div`
  display: flex;
  flex-direction: column;
  width: ${p => p.$width}px;
  padding-left: ${p => p.$pad || 2}px;
`

const SmallButton = styled.button`
  display: flex;
  align-items: center;
  gap: 5px;
  height: 26px;
  white-space: nowrap;
`

const ribbon = [
  {
    pad: 6,
    items: [
      { icon: "extruded", label: "Extruded\nBoss/Base", width: 60 },
      { icon: "revolved", label: "Revolved\nBoss/Base", width: 60 },
      {
        width: 141,
        stack: [
          ["swept", "Swept Boss/Base"],
          ["lofted", "Lofted Boss/Base"],
          ["boundary", "Boundary Boss/Base"],
        ],
      },
    ],
  },
  {
    pad: 4,
    items: [
      { icon: "extrudedCut", label: "Extruded\nCut", width: 50 },
      { icon: "hole", label: "Hole\nWizard", width: 52, menu: true },
      { icon: "revolvedCut", label: "Revolved\nCut", width: 50 },
      {
        width: 112,
        pad: 6,
        stack: [
          ["sweptCut", "Swept Cut"],
          ["loftedCut", "Lofted Cut"],
          ["boundaryCut", "Boundary Cut"],
        ],
      },
    ],
  },
  {
    items: [
      { icon: "fillet", label: "Fillet", width: 37, menu: true },
      { icon: "pattern", label: "Linear\nPattern", width: 46, menu: true },
      {
        width: 65,
        stack: [
          ["rib", "Rib"],
          ["draft", "Draft"],
          ["shell", "Shell"],
        ],
      },
      {
        width: 82,
        stack: [
          ["wrap", "Wrap"],
          ["intersect", "Intersect"],
          ["mirror", "Mirror"],
        ],
      },
    ],
  },
  {
    items: [
      { icon: "reference", label: "Reference\nGeometry", width: 62, menu: true },
      { icon: "curves", label: "Curves", width: 45, menu: true },
    ],
  },
  { items: [{ icon: "instant", label: "Instant3D", width: 62 }] },
  {
    items: [
      { icon: "thread", label: "Cosmetic\nThread", width: 58 },
      { icon: "record", label: "Record\\Pause\nMacro", width: 78 },
    ],
  },
]

/* ---------- work area ---------- */

const Main = styled.main`
  display: flex;
  flex: 1;
  min-height: 0;
`

const Workspace = styled.section`
  display: flex;
  flex: 1;
  flex-direction: column;
  min-width: 0;
  background: linear-gradient(#dcdcf0, #bfbdcb 28%, #999193 58%, #766a61 90%, #6b5f53);
`

const TabRow = styled.div`
  display: flex;
  justify-content: space-between;
  height: 23px;
`

const CommandTabs = styled.div`
  display: flex;
  border-bottom: 1px solid #888;
  background: #d4d4d4;
`

const CommandTab = styled.button`
  width: ${p => p.$width}px;
  border-right: 1px solid #888;
  background: ${p => (p.$active ? "#f7f7f7" : "transparent")};
  color: ${p => (p.$active ? "#555" : "#222")};
  font-size: 11px;
  white-space: nowrap;
`

const DocControls = styled.div`
  display: flex;
  align-items: flex-end;
  padding: 0 5px 0 0;

  button {
    height: 16px;
  }
`

const Stage = styled.div`
  display: flex;
  flex: 1;
  min-height: 0;
`

const Tree = styled.aside`
  position: relative;
  flex: none;
  width: 243px;
  border-right: 1px solid #888;
  border-bottom: 3px double #b5b5b5;
  background: #f7f7f7;
`

const Grip = styled.div`
  display: flex;
  align-items: center;
  justify-content: center;
  height: 19px;
  margin-right: 2px;
  border-top: 4px double #9fb6ba;
  border-bottom: 1px solid #c3c3c3;

  &::after {
    content: "";
    width: 6px;
    height: 6px;
    border: 1px solid #999;
    border-radius: 50%;
    background: #ddd;
  }
`

const TreeTabs = styled.div`
  display: flex;
  align-items: center;
  margin: 4px 2px 0;
  border-bottom: 1px solid #aaa;
`

const TreeTab = styled.button`
  display: flex;
  align-items: center;
  justify-content: center;
  width: 40px;
  height: 26px;
  border-top: 1px solid #888;
  border-right: 1px solid #888;
  background: ${p => (p.$active ? "#f7f7f7" : "#d2d2d2")};
`

const Filter = styled.label`
  display: flex;
  align-items: center;
  height: 25px;
  margin: 0 5px;
  border: 1px solid #c3c3c3;
  border-top: 0;

  input {
    flex: 1;
    min-width: 0;
    outline: 0;
  }
`

const TreeRoot = styled.div`
  position: relative;
  z-index: 1;
  display: flex;
  align-items: center;
  gap: 4px;
  height: 26px;
  margin: 0 2px 0 1px;
  padding: 1px 0 0 4px;
  border-bottom: 4px solid #e8b030;
  white-space: pre;
`

const TreeList = styled.ul`
  margin: -3px 2px 0 1px;
  border-bottom: 4px solid #3a8dc1;
`

const TreeItem = styled.li`
  display: grid;
  grid-template-columns: 17px 19px auto;
  column-gap: 4px;
  align-items: center;
  justify-content: start;
  height: 22px;
  padding-left: 5px;
  white-space: nowrap;
`

const Expander = styled.button`
  width: 17px;
  height: 12px;
  padding-left: 4px;

  &::after {
    content: "";
    display: block;
    width: 0;
    border: 4px solid transparent;
    border-left: 5px solid #666;
    border-right: 0;
  }
`

const SideHandle = styled.button`
  position: absolute;
  top: 359px;
  right: -9px;
  width: 9px;
  height: 39px;
  border: 1px solid #888;
  border-left: 0;
  background: #f7f7f7;

  &::after {
    content: "";
    display: block;
    width: 6px;
    height: 6px;
    border: 1px solid #999;
    border-radius: 50%;
    background: #ddd;
  }
`

const Viewport = styled.div`
  position: relative;
  flex: 1;
  min-width: 0;
`

const Model = styled.svg`
  display: block;
  width: 100%;
  height: 100%;
`

const ViewTools = styled.div`
  position: absolute;
  top: 2px;
  left: 0;
  right: 4px;
  display: flex;
  justify-content: center;
`

const BottomTabs = styled.div`
  display: flex;
  flex: none;
  height: 15px;
  border-top: 1px solid #888;
  background: #fafafa;
`

const Pager = styled.div`
  display: flex;
  align-items: center;
  padding: 0 2px 0 3px;
  gap: 1px;
  width: 67px;
  background: #c9c9c9;

  button {
    width: 15px;
    height: 13px;
    border: 1px solid #aaa;
    color: #8f8f8f;
  }

  svg {
    display: block;
    width: 100%;
    height: 100%;
  }
`

const BottomTab = styled.button`
  padding: 0 7px;
  width: ${p => p.$width}px;
  border-right: 1px solid #888;
  background: ${p => (p.$active ? "#fafafa" : "#d4d4d4")};
  font-size: ${p => p.$small ? 11 : 12}px;
  line-height: 12px;
  text-align: ${p => p.$align || "center"};
  white-space: nowrap;
`

/* ---------- task pane ---------- */

const Divider = styled.div`
  flex: none;
  width: 4px;
  background: linear-gradient(to right, #000 1px, #fff 1px 2px, #000 2px 3px, #808080 3px);
`

const TaskPane = styled.aside`
  position: relative;
  flex: none;
  width: 333px;
  border-bottom: 1px solid #000;
`

const PaneHeader = styled.div`
  display: flex;
  align-items: center;
  height: 22px;
  padding: 0 2px 2px 5px;
  border-bottom: 1px solid #111;
  background: #abacb0;

  h2 {
    flex: 1;
    margin: 0;
    font-size: 12px;
    font-weight: 700;
    text-align: center;
  }
`

const PaneTabs = styled.div`
  position: absolute;
  top: 50px;
  left: -27px;
  width: 27px;
  border: 1px solid #888;
  border-width: 1px 0 0 1px;
`

const PaneTab = styled.button`
  display: flex;
  align-items: center;
  justify-content: center;
  width: 26px;
  height: 24px;
  padding: 0 1px 2px 0;
  border-right: 1px solid ${p => (p.$active ? "#f7f7f7" : "#888")};
  border-bottom: 1px solid #888;
  background: ${p => (p.$active ? "#f7f7f7" : "#d4d4d4")};
`

const PaneBody = styled.div`
  padding: 27px 26px 0 14px;
`

const PaneLink = styled.a`
  display: flex;
  align-items: center;
  gap: 4px;
  height: 28px;
  padding-left: 2px;
  color: #484848;
  font-family: "Open Sans", sans-serif;
  font-size: 11px;
  text-decoration: none;

  svg {
    margin-bottom: 5px;
  }
`

const WelcomeLink = styled(PaneLink)`
  height: 24px;
  padding-left: 1px;
`

const PaneSection = styled.section`
  margin-top: 22px;
  border-top: 1px solid #888;
`

const SectionHead = styled.button`
  display: flex;
  align-items: center;
  justify-content: space-between;
  width: 100%;
  height: 24px;
  padding: 0 3px;
  color: #3c3c3c;
  font-family: "Open Sans", sans-serif;
  font-size: 11px;
  font-weight: 600;
`

const sections = [
  {
    title: "SOLIDWORKS Tools",
    links: [
      ["builder", "Property Tab Builder"],
      ["rx", "SOLIDWORKS Rx"],
      ["rx", "Performance Benchmark Test"],
      ["compare", "Compare My Score"],
      ["wizard", "Copy Settings Wizard"],
      ["products", "My Products"],
    ],
  },
  {
    title: "Online Resources",
    links: [
      ["market", "3DEXPERIENCE Marketplace"],
      ["handshake", "Partner Solutions"],
    ],
  },
  { title: "Subscription Services", links: [["globe", "Subscription Services"]] },
]

/* ---------- status bar and dialog ---------- */

const StatusBar = styled.footer`
  display: flex;
  flex: none;
  align-items: center;
  height: 19px;
  padding: 3px 2px 0 1px;
  border-top: 1px solid #888;
  border-bottom: 1px solid #999;
  background: #e5e5e5;
`

const StatusText = styled.span`
  flex: 1;
`

const StatusCell = styled.span`
  display: flex;
  align-items: center;
  justify-content: center;
  gap: 15px;
  width: ${p => p.$width}px;
  height: 16px;
  border-left: 1px solid #ccc;
`

const TagCell = styled(StatusCell)`
  justify-content: flex-end;
  border: 0;
`

const UpCaret = styled(Caret)`
  transform: rotate(180deg);
`

const Resize = styled.span`
  width: 9px;
  height: 9px;
  margin-left: 10px;
  background: radial-gradient(#b5b5b5 1px, transparent 1px) 0 0 / 3px 3px;
  clip-path: polygon(100% 0, 100% 100%, 0 100%);
`

const Dialog = styled.div`
  position: absolute;
  z-index: 5;
  top: 421px;
  left: 422px;
  width: 352px;
  border: 1px solid #6b6b6b;
  background: #fff;
  box-shadow: 0 4px 14px rgba(0, 0, 0, 0.35);
`

const DialogHead = styled.div`
  display: flex;
  align-items: center;
  justify-content: space-between;
  height: 29px;
  padding: 0 5px 0 8px;

  h2 {
    margin: 0;
    font-size: 12px;
    font-weight: 400;
  }
`

const DialogBody = styled.div`
  display: flex;
  gap: 10px;
  height: 53px;
  padding: 11px 10px 0;

  p {
    margin: 5px 0 0;
    line-height: 18px;
  }
`

const Warning = styled.svg`
  width: 32px;
  height: 34px;
`

const DialogFoot = styled.div`
  display: flex;
  justify-content: flex-end;
  height: 43px;
  padding: 9px 11px;
  border-top: 1px solid #dfdfdf;
  background: #f0f0f0;

  button {
    width: 66px;
    height: 23px;
    border: 2px solid #0078d7;
    background: #e1e1e1;
    line-height: 19px;
  }
`

const commandTabs = [
  ["Features", 60],
  ["Sketch", 56],
  ["Sheet Metal", 78],
  ["Weldments", 76],
  ["Evaluate", 60],
  ["MBD Dimensions", 107],
  ["SOLIDWORKS Add-Ins", 133],
  ["MBD", 56],
]

const treeItems = [
  ["history", "History", true],
  ["sensor", "传感器"],
  ["notes", "注解", true],
  ["bodies", "Solid Bodies(1)", true],
  ["material", "Material <not specified>"],
  ["plane", "前视基准面"],
  ["plane", "上视基准面"],
  ["plane", "右视基准面"],
  ["origin", "原点"],
  ["extruded", "Boss-Extrude1", true],
  ["extrudedCut", "Cut-Extrude1", true],
  ["attribute", "TestAttribute"],
]

const viewTools = [
  "zoomFit", "zoomArea", "previous", "section", "dynamic",
  "orientation", "|", "display", "|", "eye", "|",
  "appearance", "scene", "|", "monitor", "|",
]

const pagerShapes = ["M3 2v8M11 2 5 6l6 4z", "M10 2 4 6l6 4z", "M4 2l6 4-6 4z", "M3 2l6 4-6 4zM11 2v8"]

const DropButton = ({ label, width = 19, color }) => (
  <IconButton aria-label={label} $width={width}>
    <Caret $color={color} />
  </IconButton>
)

const QuickTools = () => (
  <QuickBar aria-label="Quick access">
    <IconButton aria-label="Home"><Icon name="home" /></IconButton>
    <IconButton aria-label="New" $gap={5}><Icon name="page" /></IconButton>
    <DropButton label="New options" />
    <IconButton aria-label="Open"><Icon name="open" /></IconButton>
    <DropButton label="Open options" />
    <IconButton aria-label="Save"><Icon name="save" /></IconButton>
    <DropButton label="Save options" />
    <IconButton aria-label="Print"><Icon name="print" /></IconButton>
    <DropButton label="Print options" />
    <IconButton aria-label="Undo"><Icon name="undo" /></IconButton>
    <DropButton label="Undo options" width={18} color="#999" />
    <SelectTool>
      <IconButton aria-label="Select" $width={25}><Icon name="cursor" /></IconButton>
      <DropButton label="Select options" width={12} />
    </SelectTool>
    <IconButton aria-label="Rebuild" $gap={3}><Icon name="traffic" /></IconButton>
    <IconButton aria-label="File properties" $gap={6}><Icon name="list" /></IconButton>
    <IconButton aria-label="Options" $gap={5}><Icon name="gear" size={18} /></IconButton>
    <DropButton label="More options" />
  </QuickBar>
)

const ModelView = () => (
  <Model viewBox="251 149 783 781" aria-label="Part model">
    <defs>
      <filter id="soft" x="-20%" y="-20%" width="140%" height="140%">
        <feGaussianBlur stdDeviation="6" />
      </filter>
      <linearGradient id="wall" x1="0" x2="1">
        <stop offset="0" stopColor="#736c8c" />
        <stop offset="1" stopColor="#959cb8" />
      </linearGradient>
    </defs>
    <path d="M650 198 978 668 992 738 950 700 650 262z" fill="#2c2530" opacity=".8" filter="url(#soft)" />
    <g stroke="#111" strokeLinejoin="round">
      <path d="M656 212 984 683 582 849 255 378z" fill="#fff" />
      <path d="m255 378 327 471 7 51-328-470z" fill="#a0a5c1" />
      <path d="m582 849 402-166 6 51-401 166z" fill="#89859f" />
      <path d="M580 530h77l25 36c10 19-2 36-32 36-12 0-22-4-29-13z" fill="url(#wall)" />
      <path d="M652 530h5l25 36c7 12 4 21-9 28l-18-26z" fill="#a0a5c1" />
      <path d="M604 564c14-9 41-9 51 4l18 26c-6 5-13 8-23 8-12 0-22-4-29-13z" fill="#9c9496" />
      <path d="m683 567 1 16" fill="none" />
    </g>
    <path d="m292 872-19 7" stroke="#257c25" strokeWidth="3" />
    <path d="m264 884 8-7 3 6z" fill="#2c8b2c" />
    <path d="M293 873v14" stroke="#2020a8" strokeWidth="4" />
    <path d="M289 886h9l-4 9z" fill="#1b1b96" />
    <path d="m292 872 8 12" stroke="#b51c1c" strokeWidth="4" />
    <path d="m296 886 8-5 1 11z" fill="#e02626" />
    <g fontSize="10">
      <text x="259" y="888" fill="#0a8a0a">Y</text>
      <text x="290" y="900" fill="#0000e0">Z</text>
      <text x="304" y="898" fill="#f01010">X</text>
    </g>
  </Model>
)

const App = () => {
  const [activeTab, setActiveTab] = useState("Features")
  const [dialogOpen, setDialogOpen] = useState(true)

  return (
    <Desktop>
      <GlobalStyle />
      <LeftStrip />
      <TopStrip />
      <RightStrip />
      <Window>
        <TitleBar>
          <LogoSlot>
            <Logo>
              <LogoMark viewBox="0 0 30 30" aria-hidden="true">
                <g fill="none" stroke="#da291c" strokeWidth="2.300">
                  <path d="M10 3c9-4 11 0 3 7" />
                  <path d="M7 13c11-3 12 2 5 8-3 3-7 4-11 5l9-12" strokeWidth="2" />
                  <path d="M27 11c-8-2-10 2-5 5s5 8-6 6" />
                </g>
              </LogoMark>
              <LogoText><b>SOLID</b>WORKS</LogoText>
            </Logo>
            <MenuToggle aria-label="Show menus" />
          </LogoSlot>
          <QuickTools />
          <DocTitle>Part1 *</DocTitle>
          <SearchBox>
            <Icon name="prompt" size={16} />
            <input placeholder="Search Commands" aria-label="Search Commands" />
            <Icon name="magnifier" size={18} />
            <DropButton label="Search options" width={12} />
          </SearchBox>
          <IconButton aria-label="Account" $gap={6}><Icon name="user" /></IconButton>
          <IconButton aria-label="Help" $gap={6}><HelpMark>?</HelpMark></IconButton>
          <DropButton label="Help options" width={15} />
          <IconButton aria-label="Minimize" $gap={4}><Icon name="minimize" /></IconButton>
          <IconButton aria-label="Span displays" $gap={6}><Icon name="span" /></IconButton>
          <IconButton aria-label="Maximize" $gap={6}><Icon name="maximize" /></IconButton>
          <IconButton aria-label="Close" $gap={6}><Icon name="close" /></IconButton>
        </TitleBar>

        <Ribbon>
          {ribbon.map((group, i) => (
            <RibbonGroup key={i} $pad={group.pad} $last={i === ribbon.length - 1}>
              {group.items.map((item, j) =>
                item.stack ? (
                  <SmallStack key={j} $width={item.width} $pad={item.pad}>
                    {item.stack.map(([icon, label]) => (
                      <SmallButton key={label}>
                        <Icon name={icon} />
                        {label}
                      </SmallButton>
                    ))}
                  </SmallStack>
                ) : (
                  <BigButton key={j} $width={item.width} $menu={item.menu}>
                    <Icon name={item.icon} />
                    {item.label}
                    {item.menu && <Caret />}
                  </BigButton>
                )
              )}
            </RibbonGroup>
          ))}
        </Ribbon>

        <Main>
          <Workspace>
            <TabRow>
              <CommandTabs>
                {commandTabs.map(([label, width]) => (
                  <CommandTab
                    key={label}
                    $width={width}
                    $active={label === activeTab}
                    onClick={() => setActiveTab(label)}
                  >
                    {label}
                  </CommandTab>
                ))}
              </CommandTabs>
              <DocControls>
                {["paneLeft", "paneRight", "docMinimize", "restore", "docClose"].map(name => (
                  <IconButton key={name} aria-label={name} $width={26}>
                    <Icon name={name} size={18} />
                  </IconButton>
                ))}
              </DocControls>
            </TabRow>

            <Stage>
              <Tree>
                <Grip />
                <TreeTabs>
                  {["part", "properties", "config", "target", "ball"].map((name, i) => (
                    <TreeTab key={name} aria-label={name} $active={i === 0}>
                      <Icon name={name} />
                    </TreeTab>
                  ))}
                  <IconButton aria-label="More tabs" $gap={18}>
                    <Icon name="chevronRight" />
                  </IconButton>
                </TreeTabs>
                <Filter>
                  <Icon name="funnel" />
                  <input aria-label="Filter" />
                </Filter>
                <TreeRoot>
                  <Icon name="part" size={19} />
                  {"Part1  (默认<<默认>_显示状态 1>)"}
                </TreeRoot>
                <TreeList>
                  {treeItems.map(([icon, label, expandable]) => (
                    <TreeItem key={label}>
                      {expandable ? <Expander aria-label={`Expand ${label}`} /> : <span />}
                      <Icon name={icon} size={19} />
                      {label}
                    </TreeItem>
                  ))}
                </TreeList>
                <SideHandle aria-label="Hide tree" />
              </Tree>
              <Viewport>
                <ModelView />
                <ViewTools>
                  {viewTools.map((name, i) =>
                    name === "|" ? (
                      <DropButton key={i} label={`${viewTools[i - 1]} options`} width={14} color="#888" />
                    ) : (
                      <IconButton key={i} aria-label={name} $width={26}>
                        <Icon name={name} />
                      </IconButton>
                    )
                  )}
                </ViewTools>
              </Viewport>
            </Stage>

            <BottomTabs>
              <Pager>
                {pagerShapes.map((d, i) => (
                  <button key={d} aria-label={`Scroll tabs ${i + 1}`}>
                    <svg viewBox="0 0 14 12">
                      <path d={d} fill="currentColor" stroke="currentColor" />
                    </svg>
                  </button>
                ))}
              </Pager>
              <BottomTab $width={56} $active>Model</BottomTab>
              <BottomTab $width={63} $small>3D Views</BottomTab>
              <BottomTab $width={84} $align="left">运动算例 1</BottomTab>
            </BottomTabs>
          </Workspace>

          <Divider />

          <TaskPane>
            <PaneHeader>
              <IconButton aria-label="Collapse pane"><Icon name="collapse" size={16} /></IconButton>
              <h2>SOLIDWORKS Resources</h2>
              <IconButton aria-label="Pane options"><Icon name="gear" size={18} /></IconButton>
              <IconButton aria-label="Pin pane"><Icon name="pin" size={16} /></IconButton>
            </PaneHeader>
            <PaneTabs>
              {["home", "library", "explorer", "palette", "ball", "properties"].map((name, i) => (
                <PaneTab key={name} aria-label={name} $active={i === 0}>
                  <Icon name={name} />
                </PaneTab>
              ))}
            </PaneTabs>
            <PaneBody>
              <WelcomeLink href="#welcome">
                <Icon name="home" />
                Welcome to SOLIDWORKS
              </WelcomeLink>
              {sections.map(section => (
                <PaneSection key={section.title}>
                  <SectionHead>
                    {section.title}
                    <Icon name="chevronUp" />
                  </SectionHead>
                  {section.links.map(([icon, label]) => (
                    <PaneLink key={label} href="#resources">
                      <Icon name={icon} />
                      {label}
                    </PaneLink>
                  ))}
                </PaneSection>
              ))}
            </PaneBody>
          </TaskPane>
        </Main>

        <StatusBar>
          <StatusText>SOLIDWORKS Premium 2019 SP5.0</StatusText>
          <StatusCell $width={8} />
          <StatusCell $width={77}>Editing Part</StatusCell>
          <StatusCell $width={16} />
          <StatusCell $width={119}>
            Custom
            <UpCaret />
          </StatusCell>
          <TagCell $width={58}>
            <Icon name="tag" size={18} />
          </TagCell>
          <Resize />
        </StatusBar>

        {dialogOpen && (
          <Dialog role="alertdialog" aria-labelledby="dialog-title">
            <DialogHead>
              <h2 id="dialog-title">SOLIDWORKS</h2>
              <IconButton aria-label="Close dialog" onClick={() => setDialogOpen(false)}>
                <Icon name="close" />
              </IconButton>
            </DialogHead>
            <DialogBody>
              <Warning viewBox="0 0 32 34" aria-hidden="true">
                <path d="M16 2 31 33H1z" fill="#ffe000" stroke="#fdb813" />
                <path d="M15 13h2v12h-2zM15 27h2v2h-2z" fill="#111" />
              </Warning>
              <p>连接成功！</p>
            </DialogBody>
            <DialogFoot>
              <button onClick={() => setDialogOpen(false)}>确定</button>
            </DialogFoot>
          </Dialog>
        )}
      </Window>
    </Desktop>
  )
}

export default App
